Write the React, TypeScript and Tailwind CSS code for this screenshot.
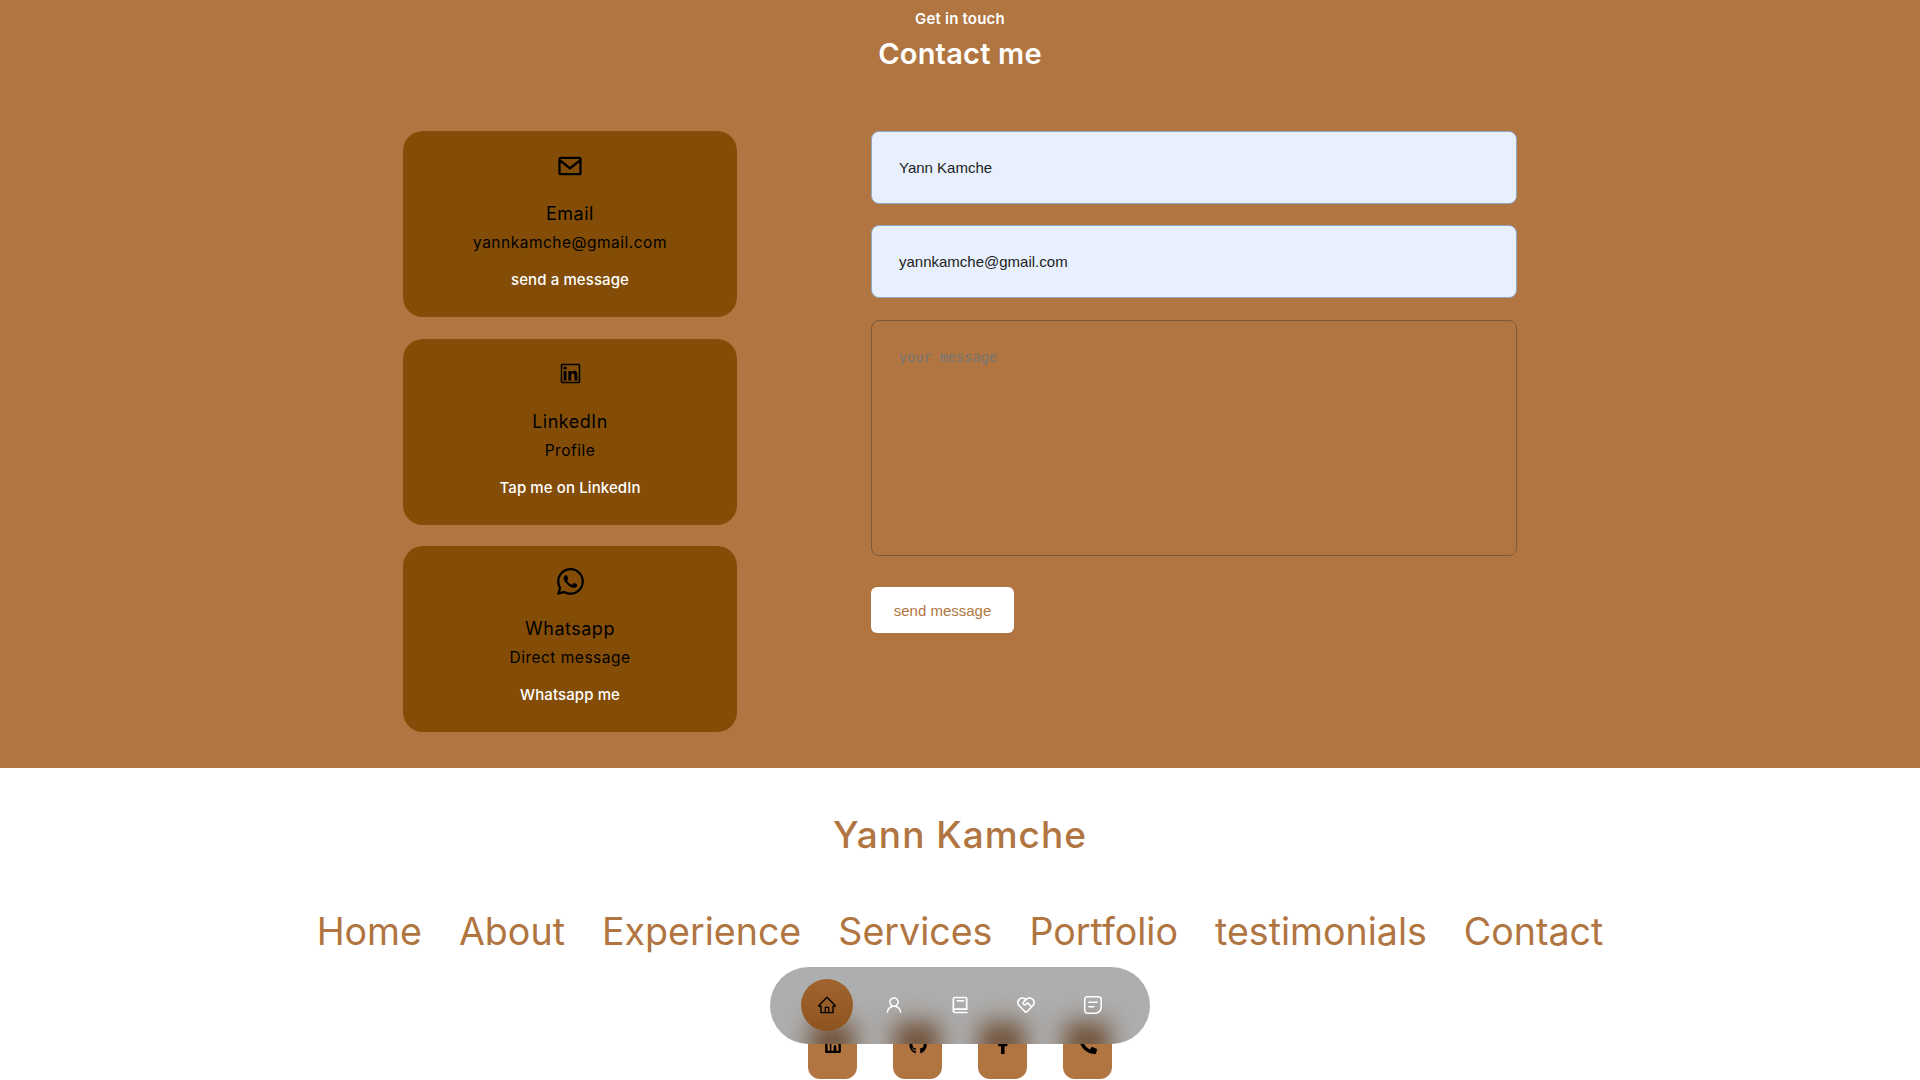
import { ReactNode } from "react";
import { AiOutlineHome, AiOutlineUser, AiOutlineLinkedin } from "react-icons/ai";
import { BiBook, BiEnvelope } from "react-icons/bi";
import { RiServiceLine } from "react-icons/ri";
import { BsWhatsapp } from "react-icons/bs";
import { FaGithub, FaFacebookF, FaPhoneAlt, FaLinkedin } from "react-icons/fa";

const cards: { icon: ReactNode; title: string; info: string; action: string }[] = [
  { icon: <BiEnvelope size={28} />, title: "Email", info: "yannkamche@gmail.com", action: "send a message" },
  { icon: <AiOutlineLinkedin size={25} />, title: "LinkedIn", info: "Profile", action: "Tap me on LinkedIn" },
  { icon: <BsWhatsapp size={27} />, title: "Whatsapp", info: "Direct message", action: "Whatsapp me" },
];

const links = ["Home", "About", "Experience", "Services", "Portfolio", "testimonials", "Contact"];

function ContactCard({ icon, title, info, action }: { icon: ReactNode; title: string; info: string; action: string }) {
  return (
    <article className="flex h-[186px] flex-col items-center rounded-[20px] bg-[#844d07] pt-[20px] text-black">
      <div className="flex h-[30px] items-center justify-center">{icon}</div>
      <h4 className="mt-[19px] text-[18px] leading-[27px] tracking-[0.5px]">{title}</h4>
      <p className="mt-[5px] text-[15.5px] leading-[22px] tracking-[0.5px]">{info}</p>
      <a href="#" className="mt-[15px] text-[15px] leading-[22px] font-medium tracking-[0.1px] text-white">{action}</a>
    </article>
  );
}

function SocialLink({ children }: { children: ReactNode }) {
  return (
    <a href="#" className="flex h-[58px] w-[49px] items-start justify-center rounded-[12px] bg-[#b07541] pt-[15px] text-black">
      {children}
    </a>
  );
}

function NoteIcon() {
  return (
    <svg width="22" height="22" viewBox="0 0 24 24" fill="none" stroke="currentColor" strokeWidth="1.7" strokeLinecap="round" strokeLinejoin="round">
      <path d="M6 3h12a3 3 0 0 1 3 3v8c0 4-3 7-7 7H6a3 3 0 0 1-3-3V6a3 3 0 0 1 3-3z" />
      <path d="M7.5 9h9M7.5 14h5.5" />
    </svg>
  );
}

export default function App() {
  return (
    <div className="relative h-screen overflow-hidden bg-white font-['Inter',sans-serif]">
      {/* Contact section */}
      <section className="h-[768px] bg-[#b07541] pt-[8px]">
        <h5 className="text-center text-[15px] leading-[21px] font-semibold tracking-[0.2px] text-white">Get in touch</h5>
        <h2 className="mt-[4px] text-center text-[29px] leading-[42px] font-semibold tracking-[0.2px] text-white">Contact me</h2>
        <div className="mx-auto mt-[56px] grid w-[1114px] grid-cols-[334px_646px] gap-x-[134px]">
          <div className="flex flex-col gap-[21.5px]">
            {cards.map((c) => (
              <ContactCard key={c.title} {...c} />
            ))}
          </div>
          <form className="flex flex-col items-start font-['Liberation_Sans',sans-serif]">
            <div className="flex h-[73px] w-full items-center rounded-[8px] border border-[#8fa8c8] bg-[#e8f0fe] px-[27px] pt-[1px] text-[15px] text-[#222]">Yann Kamche</div>
            <div className="mt-[21px] flex h-[73px] w-full items-center rounded-[8px] border border-[#8fa8c8] bg-[#e8f0fe] px-[27px] pt-[1px] text-[15px] text-[#222]">yannkamche@gmail.com</div>
            <textarea
              placeholder="your message"
              className="mt-[22px] h-[236px] w-full resize-none rounded-[8px] border border-[#7b5a3a] bg-transparent px-[27px] pt-[26px] font-['DejaVu_Sans_Mono',monospace] text-[13.6px] placeholder:text-[#757575]"
            />
            <button type="button" className="mt-[31px] h-[46px] w-[143px] rounded-[6px] bg-white pt-[2px] text-[15px] text-[#b07541]">send message</button>
          </form>
        </div>
      </section>

      {/* Footer */}
      <footer className="flex flex-col items-center">
        <a href="#" className="mt-[43px] text-[37px] leading-[47px] font-medium tracking-[1px] text-[#b07541]">Yann Kamche</a>
        <ul className="mt-[51px] flex gap-[37px] text-[37.6px] leading-[46px] text-[#b07541]">
          {links.map((l) => (
            <li key={l}>{l}</li>
          ))}
        </ul>
        <div className="mt-[66px] flex gap-[36px]">
          <SocialLink><FaLinkedin size={18} /></SocialLink>
          <SocialLink><FaGithub size={18} /></SocialLink>
          <SocialLink><FaFacebookF size={18} /></SocialLink>
          <SocialLink><FaPhoneAlt size={18} /></SocialLink>
        </div>
      </footer>

      {/* Floating nav, the soft spots stand in for the social buttons showing through the frosted bar */}
      <nav className="absolute top-[967px] left-[770px] z-10 h-[77px] w-[380px] rounded-full bg-[#aeaeae]">
        <div className="absolute inset-0 overflow-hidden rounded-full">
          <div className="absolute bottom-[-18px] left-[39px] h-[40px] w-[46px] bg-[#6f4f36] blur-[12px]" />
          <div className="absolute bottom-[-18px] left-[124px] h-[40px] w-[46px] bg-[#6f4f36] blur-[12px]" />
          <div className="absolute bottom-[-18px] left-[209px] h-[40px] w-[46px] bg-[#6f4f36] blur-[12px]" />
          <div className="absolute bottom-[-18px] left-[294px] h-[40px] w-[46px] bg-[#6f4f36] blur-[12px]" />
        </div>
        <div className="relative flex items-start justify-center gap-[14.4px] pt-[12px]">
          <a href="#" className="flex size-[52px] items-center justify-center rounded-full bg-linear-to-b from-[#a1642f] to-[#8e5420] text-black"><AiOutlineHome size={20} /></a>
          <a href="#" className="flex size-[52px] items-center justify-center rounded-full text-white"><AiOutlineUser size={20} /></a>
          <a href="#" className="flex size-[52px] items-center justify-center rounded-full text-white"><BiBook size={20} /></a>
          <a href="#" className="flex size-[52px] items-center justify-center rounded-full text-white"><RiServiceLine size={20} /></a>
          <a href="#" className="flex size-[52px] items-center justify-center rounded-full text-white"><NoteIcon /></a>
        </div>
      </nav>
    </div>
  );
}
